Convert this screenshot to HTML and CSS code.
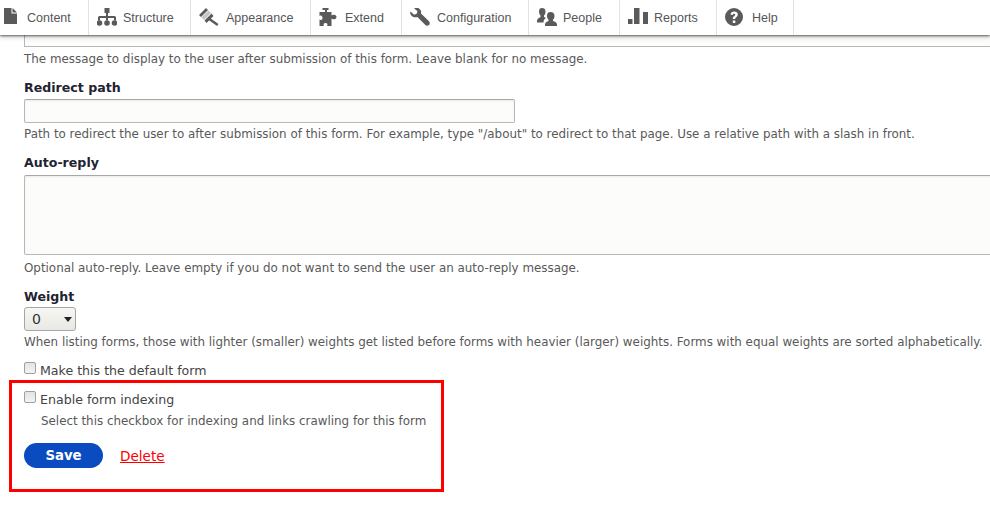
FILE: index.html
```html
<!DOCTYPE html>
<html lang="en">
<head>
<meta charset="utf-8">
<title>Contact form settings</title>
<link rel="stylesheet" href="styles.css">
</head>
<body>
<nav class="toolbar">
  <a class="tab tab-content"><svg class="ico ico-doc" viewBox="0 0 13 16"><path d="M0 0h7.500v5.500H13V16H0zM8.500 0L13 4.500H8.500z"/></svg>Content</a>
  <a class="tab tab-structure"><svg class="ico" viewBox="0 0 20 18"><path d="M7.500 0h5v5H11v3h6.500a1.500 1.500 0 0 1 1.500 1.500V12.500h-2V10h-6v2.500H9V10H3v2.500H1V9.500A1.500 1.500 0 0 1 2.500 8H9V5H7.500z"/><circle cx="2.500" cy="15" r="2.800"/><circle cx="10" cy="15" r="2.800"/><circle cx="17.500" cy="15" r="2.800"/></svg>Structure</a>
  <a class="tab tab-appearance"><svg class="ico" viewBox="0 0 20 18"><path d="M0 7l7-7 2 2-7 7zM5.500 12.500l7-7 2 2.500-7 7z"/><path class="soft" d="M2.500 9.500l7-7 2.500 2.500-7 7z"/><path d="M11 10l8.500 6-1.500 2-9-6.500z"/></svg>Appearance</a>
  <a class="tab tab-extend"><svg class="ico" viewBox="1.500 1 18 18"><path d="M5 1h6v2H9.500v2H14v3.500c1-1.200 5-1.500 5 1.500s-4 2.700-5 1.500V19H9.500c1-1.500.5-3-1.500-3s-2.500 1.500-1.500 3H2v-6.500c1.500 1 3 .5 3-1.500S3.500 8 2 9V5h5.500V3H5z"/></svg>Extend</a>
  <a class="tab tab-config"><svg class="ico" viewBox="1.500 1 19.500 17.500"><path d="M2 4.500l3.500 3 2.500-.8.800-2.500L5.500 1.200C8 .2 11 1 12 3.500c.4 1 .4 2 .2 2.800L20 14c1 1 1 2.500 0 3.500s-2.500 1-3.500 0L8.700 9.800C6 10.700 3 9.500 2 7c-.4-.8-.4-1.700 0-2.500z"/></svg>Configuration</a>
  <a class="tab tab-people"><svg class="ico" viewBox="1 1 20 18"><path d="M6 1c2 0 3.500 1 3.500 3.500 0 1.500-.5 3-1.500 4v1.500c1 .4 1.500.7 2 1-1.500 1-2.500 2-2.500 4.500H1v-2c0-1.500 2-2.500 3.500-3.500V8.500C3.500 7.500 3 6 3 4.500 3 2 4 1 6 1z"/><path d="M14.500 5C17 5 18.500 6.500 18.500 9c0 1.500-.5 2.800-1.500 3.800V14c2 .8 4 1.500 4 3.500V19H9v-1.500c0-2 2-2.700 3.500-3.500v-1.200C11.500 11.800 11 10.500 11 9c0-2.500 1-4 3.500-4z"/></svg>People</a>
  <a class="tab tab-reports"><svg class="ico" viewBox="0 0 20 18"><path d="M0 11h4.500v5H0zM6 0h5.500v16H6zM15 4h5v12h-5z"/></svg>Reports</a>
  <a class="tab tab-help"><svg class="ico" viewBox="2 1 20 18"><path fill-rule="evenodd" d="M11 1a9 9 0 1 1 0 18 9 9 0 0 1 0-18zM9.800 13.500v2.500h2.500v-2.500zM7.500 7.500l2.200.5c.2-.8.600-1.300 1.300-1.300s1.200.4 1.200 1c0 1.200-2.400 1.500-2.400 4.300h2.400c0-1.800 2.600-2 2.600-4.500 0-1.900-1.600-3-3.700-3-2 0-3.300 1-3.600 3z"/></svg>Help</a>
</nav>
<main class="form">
  <div class="textarea-stub"></div>
  <p class="desc desc-first">The message to display to the user after submission of this form. Leave blank for no message.</p>

  <label class="label label-redirect">Redirect path</label>
  <div class="input"></div>
  <p class="desc">Path to redirect the user to after submission of this form. For example, type "/about" to redirect to that page. Use a relative path with a slash in front.</p>

  <label class="label label-reply">Auto-reply</label>
  <div class="textarea"></div>
  <p class="desc">Optional auto-reply. Leave empty if you do not want to send the user an auto-reply message.</p>

  <label class="label label-weight">Weight</label>
  <div class="select"><span>0</span><i class="caret"></i></div>
  <p class="desc">When listing forms, those with lighter (smaller) weights get listed before forms with heavier (larger) weights. Forms with equal weights are sorted alphabetically.</p>

  <div class="check check-default"><span class="box"></span><span>Make this the default form</span></div>

  <section class="highlight">
    <div class="check"><span class="box"></span><span>Enable form indexing</span></div>
    <p class="desc desc-index">Select this checkbox for indexing and links crawling for this form</p>
    <div class="actions">
      <a class="save">Save</a>
      <a class="delete">Delete</a>
    </div>
  </section>
</main>
</body>
</html>
```
FILE: styles.css
```css
html, body {
  margin: 0;
  height: 529px;
  overflow: hidden;
  background: #fff;
}
body {
  font-family: "DejaVu Sans", sans-serif;
  color: #222330;
}
.toolbar {
  position: relative;
  z-index: 2;
  display: flex;
  height: 35px;
  background: #fff;
  box-shadow: 0 1px 2px rgba(0, 0, 0, .55), 0 2px 5px rgba(0, 0, 0, .2);
  font: 12.500px "Liberation Sans", sans-serif;
  color: #565656;
}
.tab {
  display: flex;
  align-items: center;
  box-sizing: border-box;
  border-right: 1px solid #e3e3e3;
  padding-left: 8px;
  gap: 7px;
}
.tab-content { width: 89px; padding-left: 4px; gap: 10px; }
.tab-structure { width: 102px; gap: 6px; }
.tab-appearance { width: 120px; gap: 7px; }
.tab-extend { width: 91px; padding-left: 7px; gap: 7px; }
.tab-config { width: 127px; gap: 7px; }
.tab-people { width: 91px; gap: 6px; }
.tab-reports { width: 97px; gap: 6px; }
.tab-help { width: 77px; gap: 7px; }
.ico {
  width: 20px;
  height: 18px;
  margin: -2px 0 0;
  fill: #5a5a5a;
  flex: none;
}
.ico-doc { width: 13px; height: 16px; margin-top: -4px; }
.soft { opacity: .35; }
.form {
  padding-left: 24px;
  width: 1100px;
  box-sizing: border-box;
}
.textarea-stub {
  height: 11px;
  border: 1px solid #b8b8b8;
  border-top: 0;
  background: #fcfcfa;
}
.desc {
  margin: 0;
  font-size: 11.900px;
  line-height: 18px;
  color: #595959;
  white-space: nowrap;
}
.desc-first { margin-top: 3px; }
.label {
  display: block;
  font-size: 12.600px;
  font-weight: 700;
  line-height: 18px;
  color: #222330;
}
.label-redirect { margin-top: 11px; }
.label-reply { margin-top: 11px; }
.label-weight { margin-top: 11px; }
.input {
  box-sizing: border-box;
  width: 491px;
  height: 24px;
  margin-top: 2px;
  border: 1px solid #b8b8b8;
  border-top-color: #a8a8a8;
  border-radius: 2px;
  background: #fcfcfa;
  box-shadow: inset 0 1px 2px rgba(0, 0, 0, .08);
}
.input + .desc { margin-top: 2px; }
.textarea {
  box-sizing: border-box;
  height: 80px;
  margin-top: 3px;
  border: 1px solid #b8b8b8;
  border-top-color: #a8a8a8;
  border-radius: 2px;
  background: #fcfcfa;
  box-shadow: inset 0 1px 2px rgba(0, 0, 0, .08);
}
.textarea + .desc { margin-top: 4px; }
.select {
  box-sizing: border-box;
  display: flex;
  align-items: center;
  justify-content: space-between;
  width: 52px;
  height: 24px;
  margin-top: 1px;
  padding: 0 3px 0 7px;
  border: 1px solid #a6a6a6;
  border-radius: 3px;
  background: linear-gradient(#f6f6f3, #e8e8e4);
  font-size: 14px;
  color: #333;
}
.caret {
  width: 0;
  height: 0;
  border-left: 4.500px solid transparent;
  border-right: 4.500px solid transparent;
  border-top: 5px solid #222;
}
.select + .desc { margin-top: 2px; }
.check {
  display: flex;
  align-items: flex-start;
  gap: 4px;
  font-size: 12.600px;
  line-height: 18px;
  color: #444;
  white-space: nowrap;
}
.check span:last-child { padding-top: 1px; }
.check-default { margin-top: 10px; }
.box {
  box-sizing: border-box;
  width: 12px;
  height: 12px;
  margin-top: 1px;
  border: 1px solid #a0a0a0;
  border-radius: 2px;
  background: linear-gradient(#e4e4e4, #f3f3f3);
}
.highlight {
  box-sizing: border-box;
  width: 435px;
  height: 112px;
  margin: 0 0 0 -15px;
  padding: 7px 0 0 12px;
  border: 3px solid #f00;
}
.desc-index { margin: 3px 0 0 17px; }
.actions {
  display: flex;
  align-items: center;
  gap: 17px;
  margin-top: 13px;
}
.save {
  width: 79px;
  height: 25px;
  border-radius: 13px;
  background: #0a4bbf;
  color: #fff;
  font-size: 13.300px;
  font-weight: 700;
  line-height: 25px;
  text-align: center;
}
.delete {
  font-size: 13.600px;
  color: #f00;
  text-decoration: underline;
}
```
